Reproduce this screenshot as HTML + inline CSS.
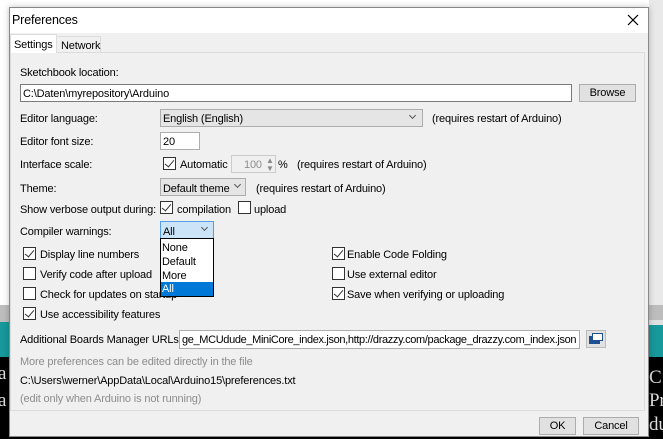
<!DOCTYPE html>
<html><head><meta charset="utf-8"><style>
*{margin:0;padding:0;box-sizing:border-box}
body{width:663px;height:439px;overflow:hidden;position:relative;background:#fff;font-family:"Liberation Sans",sans-serif;font-size:11px;letter-spacing:-0.15px;color:#000}
.a{position:absolute;white-space:nowrap}
.t{position:absolute;white-space:nowrap;line-height:14px;margin-top:1px}
.box{position:absolute;background:#fff;border:1px solid #7a7a7a}
.cb{position:absolute;width:13px;height:13px;border:1px solid #333;background:#fff}
.cb.c::after{content:"";position:absolute;left:3px;top:0px;width:4px;height:8px;border-right:1.3px solid #333;border-bottom:1.3px solid #333;transform:rotate(40deg)}
.dd{position:absolute;background:#e5e5e5;border:1px solid #adadad}
.chev{position:absolute;width:5px;height:5px;border-right:1px solid #555;border-bottom:1px solid #555;transform:rotate(45deg)}
.btn{position:absolute;background:#e1e1e1;border:1px solid #adadad;text-align:center;line-height:16px}
.g{color:#8d8d8d}
.term{position:absolute;color:#ddd;font-family:"Liberation Serif",serif;font-size:19px}
</style></head><body>
<div class="a" style="left:0;top:0;width:10px;height:322px;background:#fff"></div>
<div class="a" style="left:0;top:305px;width:10px;height:17px;background:#bdbdbd"></div>
<div class="a" style="left:0;top:322px;width:10px;height:35px;background:#17989a"></div>
<div class="a" style="left:0;top:357px;width:663px;height:82px;background:#000"></div>
<div class="a" style="left:649px;top:0;width:14px;height:305px;background:#e9e9e9"></div>
<div class="a" style="left:649px;top:305px;width:14px;height:15px;background:#bdbdbd"></div>
<div class="a" style="left:649px;top:320px;width:14px;height:5px;background:#e0e0e0"></div>
<div class="a" style="left:649px;top:325px;width:14px;height:32px;background:#17989a"></div>
<div class="term" style="left:-2px;top:363px">a</div>
<div class="term" style="left:-2px;top:390px">a</div>
<div class="term" style="left:649px;top:367px">C:</div>
<div class="term" style="left:649px;top:390px">Pr</div>
<div class="term" style="left:649px;top:414px">du</div>
<div class="a" style="left:9px;top:7px;width:640px;height:430px;background:#f0f0f0;border:1px solid #888;box-shadow:0 0 6px rgba(0,0,0,.25)"></div>
<div class="a" style="left:10px;top:8px;width:638px;height:25px;background:#fff"></div>
<div class="t" style="left:12px;top:12px;font-size:12.5px">Preferences</div>
<svg class="a" style="left:627px;top:14px" width="12" height="12"><path d="M1 1L11 11M11 1L1 11" stroke="#000" stroke-width="1.2"/></svg>
<div class="a" style="left:10px;top:52px;width:635px;height:359px;border:1px solid #dcdcdc;background:#f0f0f0"></div>
<div class="a" style="left:10px;top:34px;width:47px;height:19px;background:#fff;border:1px solid #dcdcdc;border-bottom:none"></div>
<div class="t" style="left:14px;top:37px">Settings</div>
<div class="a" style="left:57px;top:36px;width:44px;height:16px;background:#f0f0f0;border:1px solid #dcdcdc;border-left:none;border-bottom:none"></div>
<div class="t" style="left:61px;top:38px">Network</div>

<div class="t" style="left:20px;top:65px">Sketchbook location:</div>
<div class="box" style="left:20px;top:84px;width:552px;height:18px"></div>
<div class="t" style="left:23px;top:86px">C:\Daten\myrepository\Arduino</div>
<div class="btn" style="left:579px;top:84px;width:57px;height:18px">Browse</div>

<div class="t" style="left:20px;top:111px">Editor language:</div>
<div class="dd" style="left:160px;top:109px;width:263px;height:18px"></div>
<div class="t" style="left:163px;top:111px">English (English)</div>
<div class="chev" style="left:410px;top:113px"></div>
<div class="t" style="left:432px;top:111px">(requires restart of Arduino)</div>

<div class="t" style="left:20px;top:134px">Editor font size:</div>
<div class="box" style="left:160px;top:132px;width:40px;height:18px;border-color:#adadad"></div>
<div class="t" style="left:163px;top:134px">20</div>

<div class="t" style="left:20px;top:157px">Interface scale:</div>
<div class="cb c" style="left:163px;top:157px"></div>
<div class="t" style="left:180px;top:157px">Automatic</div>
<div class="a" style="left:231px;top:155px;width:45px;height:18px;border:1px solid #ccc;background:#f0f0f0"></div>
<div class="t g" style="left:244px;top:157px">100</div>
<div class="t" style="left:266px;top:153px;font-size:8px;color:#888">▲</div>
<div class="t" style="left:266px;top:161px;font-size:8px;color:#888">▼</div>
<div class="t" style="left:278px;top:157px">%</div>
<div class="t" style="left:297px;top:157px">(requires restart of Arduino)</div>

<div class="t" style="left:20px;top:181px">Theme:</div>
<div class="dd" style="left:160px;top:178px;width:86px;height:18px"></div>
<div class="t" style="left:163px;top:181px">Default theme</div>
<div class="chev" style="left:235px;top:182px"></div>
<div class="t" style="left:256px;top:181px">(requires restart of Arduino)</div>

<div class="t" style="left:20px;top:202px">Show verbose output during:</div>
<div class="cb c" style="left:160px;top:201px"></div>
<div class="t" style="left:177px;top:202px">compilation</div>
<div class="cb" style="left:238px;top:201px"></div>
<div class="t" style="left:254px;top:202px">upload</div>

<div class="t" style="left:20px;top:224px">Compiler warnings:</div>
<div class="a" style="left:160px;top:221px;width:54px;height:18px;background:#cce4f7;border:1px solid #569de5"></div>
<div class="t" style="left:163px;top:224px">All</div>
<div class="chev" style="left:202px;top:225px"></div>

<div class="cb c" style="left:23px;top:247px"></div><div class="t" style="left:40px;top:247px">Display line numbers</div>
<div class="cb" style="left:23px;top:267px"></div><div class="t" style="left:40px;top:267px">Verify code after upload</div>
<div class="cb" style="left:23px;top:287px"></div><div class="t" style="left:40px;top:287px">Check for updates on startup</div>
<div class="cb c" style="left:23px;top:307px"></div><div class="t" style="left:40px;top:307px">Use accessibility features</div>

<div class="cb c" style="left:332px;top:247px"></div><div class="t" style="left:347px;top:247px">Enable Code Folding</div>
<div class="cb" style="left:332px;top:267px"></div><div class="t" style="left:347px;top:267px">Use external editor</div>
<div class="cb c" style="left:332px;top:287px"></div><div class="t" style="left:347px;top:287px">Save when verifying or uploading</div>

<div class="a" style="left:160px;top:238px;width:54px;height:59px;background:#fff;border:1px solid #000"></div>
<div class="t" style="left:162px;top:240px">None</div>
<div class="t" style="left:162px;top:254px">Default</div>
<div class="t" style="left:162px;top:268px">More</div>
<div class="a" style="left:161px;top:282px;width:52px;height:14px;background:#0078d7"></div>
<div class="t" style="left:162px;top:281px;color:#fff">All</div>

<div class="t" style="left:20px;top:332px">Additional Boards Manager URLs:</div>
<div class="box" style="left:179px;top:330px;width:401px;height:19px;overflow:hidden;border-color:#adadad"><span class="t" style="left:2px;top:1px;letter-spacing:-0.35px">ge_MCUdude_MiniCore_index.json,http://drazzy.com/package_drazzy.com_index.json</span></div>
<div class="a" style="left:586px;top:330px;width:20px;height:18px;background:#e1e1e1;border:1px solid #bbb"></div>
<div class="a" style="left:589px;top:336px;width:11px;height:8px;background:#1d4f91"></div>
<div class="a" style="left:592px;top:333px;width:11px;height:8px;background:#fff;border:1.5px solid #1d4f91"></div>

<div class="t g" style="left:20px;top:354px">More preferences can be edited directly in the file</div>
<div class="t" style="left:20px;top:373px">C:\Users\werner\AppData\Local\Arduino15\preferences.txt</div>
<div class="t g" style="left:20px;top:391px">(edit only when Arduino is not running)</div>

<div class="btn" style="left:539px;top:417px;width:37px;height:18px">OK</div>
<div class="btn" style="left:583px;top:417px;width:56px;height:18px">Cancel</div>
</body></html>
